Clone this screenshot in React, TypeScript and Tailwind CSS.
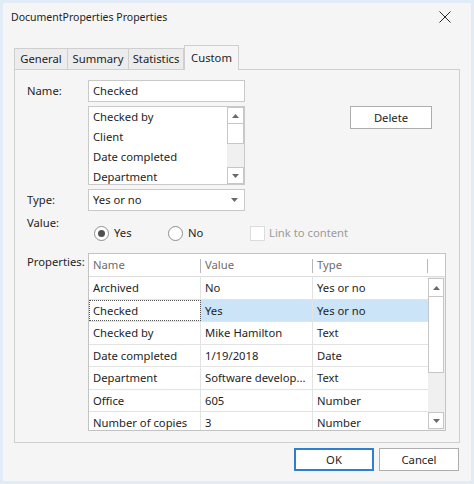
import React from "react";

const rows = [
  { name: "Archived", value: "No", type: "Yes or no" },
  { name: "Checked", value: "Yes", type: "Yes or no", selected: true },
  { name: "Checked by", value: "Mike Hamilton", type: "Text" },
  { name: "Date completed", value: "1/19/2018", type: "Date" },
  { name: "Department", value: "Software develop...", type: "Text" },
  { name: "Office", value: "605", type: "Number" },
  { name: "Number of copies", value: "3", type: "Number" },
];

function Arrow({ down }: { down?: boolean }) {
  return (
    <svg width="7" height="4" viewBox="0 0 7 4">
      {down ? <path d="M0 0 H7 L3.5 4 Z" fill="#6a6a6a" /> : <path d="M0 4 H7 L3.5 0 Z" fill="#6a6a6a" />}
    </svg>
  );
}

function ArrowBox({ down, className }: { down?: boolean; className: string }) {
  return (
    <div className={`flex items-center justify-center border border-[#c6c6c6] bg-white ${className}`}>
      <Arrow down={down} />
    </div>
  );
}

function Radio({ checked, label, className }: { checked?: boolean; label: string; className: string }) {
  return (
    <div className={`flex items-center gap-[5px] ${className}`}>
      <div className="w-[15px] h-[15px] rounded-full border border-[#8f8f8f] bg-white flex items-center justify-center">
        {checked && <div className="w-[7px] h-[7px] rounded-full bg-[#505050]" />}
      </div>
      <span>{label}</span>
    </div>
  );
}

export default function App() {
  return (
    <div className="w-[474px] h-[484px] bg-[#e2ecf6] p-[3px] font-['Noto_Sans',sans-serif] text-[11.25px] text-[#1e1e1e] leading-none whitespace-nowrap">
      <div className="w-full h-full bg-[#f5f5f5] flex flex-col">
        {/* Title bar */}
        <div className="h-[28px] flex items-center justify-between pl-[8px] pr-[20px] shrink-0">
          <span className="text-[10.5px]">DocumentProperties Properties</span>
          <svg width="12" height="12" viewBox="0 0 12 12">
            <path d="M0.5 0.5 L11.5 11.5 M11.5 0.5 L0.5 11.5" stroke="#2a2a2a" strokeWidth="1" />
          </svg>
        </div>

        {/* Tabs */}
        <div className="ml-[11px] mt-[14px] flex items-end h-[24px] relative z-10">
          <div className="w-[54px] h-[21px] -mr-px border border-b-0 border-[#cfcfcf] bg-[#ececec] flex items-center justify-center">General</div>
          <div className="w-[62px] h-[21px] -mr-px border border-b-0 border-[#cfcfcf] bg-[#ececec] flex items-center justify-center">Summary</div>
          <div className="w-[56px] h-[21px] border border-b-0 border-[#cfcfcf] bg-[#ececec] flex items-center justify-center">Statistics</div>
          <div className="w-[55px] h-[25px] border border-b-0 border-[#cfcfcf] bg-[#f5f5f5] flex items-center justify-center -mb-px">
            Custom
          </div>
        </div>

        {/* Panel */}
        <div className="ml-[11px] w-[446px] h-[374px] border border-[#cfcfcf] flex flex-col pl-[12px] pt-[10px] shrink-0">
          {/* Name */}
          <div className="flex items-center h-[22px]">
            <span className="w-[61px]">Name:</span>
            <div className="w-[157px] h-[22px] border border-[#c9c9c9] bg-white flex items-center px-[4px]">Checked</div>
          </div>

          {/* List + Delete */}
          <div className="flex mt-[4px]">
            <div className="w-[61px]" />
            <div className="w-[157px] h-[79px] border border-[#c9c9c9] bg-white flex">
              <div className="flex-1 flex flex-col pl-[4px]">
                {["Checked by", "Client", "Date completed", "Department"].map((i) => (
                  <div key={i} className="h-[20px] flex items-center shrink-0">
                    {i}
                  </div>
                ))}
              </div>
              <div className="w-[17px] bg-[#f0f0f0] flex flex-col">
                <ArrowBox className="h-[17px]" />
                <div className="h-[20px] border border-t-0 border-[#c6c6c6] bg-white" />
                <div className="flex-1" />
                <ArrowBox down className="h-[17px]" />
              </div>
            </div>
            <div className="ml-[105px] w-[82px] h-[23px] border border-[#adadad] bg-white flex items-center justify-center">
              Delete
            </div>
          </div>

          {/* Type */}
          <div className="flex items-center mt-[4px]">
            <span className="w-[61px]">Type:</span>
            <div className="w-[157px] h-[22px] border border-[#c9c9c9] bg-white flex items-center justify-between pl-[4px] pr-[6px]">
              <span>Yes or no</span>
              <Arrow down />
            </div>
          </div>

          {/* Value */}
          <div className="mt-[5px] h-[14px] flex items-center">Value:</div>
          <div className="flex items-center ml-[67px] -mt-[6px] h-[18px]">
            <Radio checked label="Yes" className="w-[74px]" />
            <Radio label="No" className="w-[82px]" />
            <div className="flex items-center gap-[4px] text-[#9b9b9b]">
              <div className="w-[15px] h-[15px] border border-[#dcdcdc] bg-white" />
              <span>Link to content</span>
            </div>
          </div>

          {/* Properties */}
          <div className="flex mt-[11px]">
            <span className="w-[61px] pt-[3px]">Properties:</span>
            <div className="w-[358px] h-[178px] border border-[#c3c3c3] bg-white flex flex-col overflow-hidden">
              <div className="h-[23px] shrink-0 flex items-center border-b border-[#dcdcdc] text-[#6d6d6d]">
                {[
                  ["Name", "w-[112px]"],
                  ["Value", "w-[112px]"],
                  ["Type", "w-[115px]"],
                ].map(([h, w]) => (
                  <div key={h} className={`${w} h-full flex items-center pl-[4px] relative`}>
                    {h}
                    <div className="absolute right-0 top-[5px] h-[14px] w-px bg-[#b8b8b8]" />
                  </div>
                ))}
              </div>
              <div className="flex flex-1 min-h-0">
                <div className="w-[339px] flex flex-col">
                  {rows.map((r) => (
                    <div key={r.name} className="h-[22.5px] shrink-0 flex border-b border-[#e3e3e3]">
                      <div
                        className={`w-[112px] flex items-center pl-[4px] border-r border-[#e3e3e3] ${
                          r.selected ? "outline outline-1 outline-dotted outline-[#555] -outline-offset-1" : ""
                        }`}
                      >
                        {r.name}
                      </div>
                      <div className={`w-[112px] flex items-center pl-[4px] border-r border-[#e3e3e3] ${r.selected ? "bg-[#cce4f7]" : ""}`}>
                        {r.value}
                      </div>
                      <div className={`w-[115px] flex items-center pl-[4px] ${r.selected ? "bg-[#cce4f7]" : ""}`}>
                        {r.type}
                      </div>
                    </div>
                  ))}
                </div>
                <div className="w-[17px] bg-[#f0f0f0] flex flex-col py-[1px] pr-[1px]">
                  <ArrowBox className="h-[19px]" />
                  <div className="h-[76px] border border-t-0 border-[#c6c6c6] bg-white" />
                  <div className="flex-1" />
                  <ArrowBox down className="h-[17px]" />
                </div>
              </div>
            </div>
          </div>
        </div>

        {/* Buttons */}
        <div className="flex justify-end gap-[5px] mt-[5px] pr-[12px]">
          <div className="w-[80px] h-[23px] border-2 border-[#2f7fd0] bg-white flex items-center justify-center">OK</div>
          <div className="w-[80px] h-[23px] border border-[#adadad] bg-white flex items-center justify-center">Cancel</div>
        </div>
      </div>
    </div>
  );
}
